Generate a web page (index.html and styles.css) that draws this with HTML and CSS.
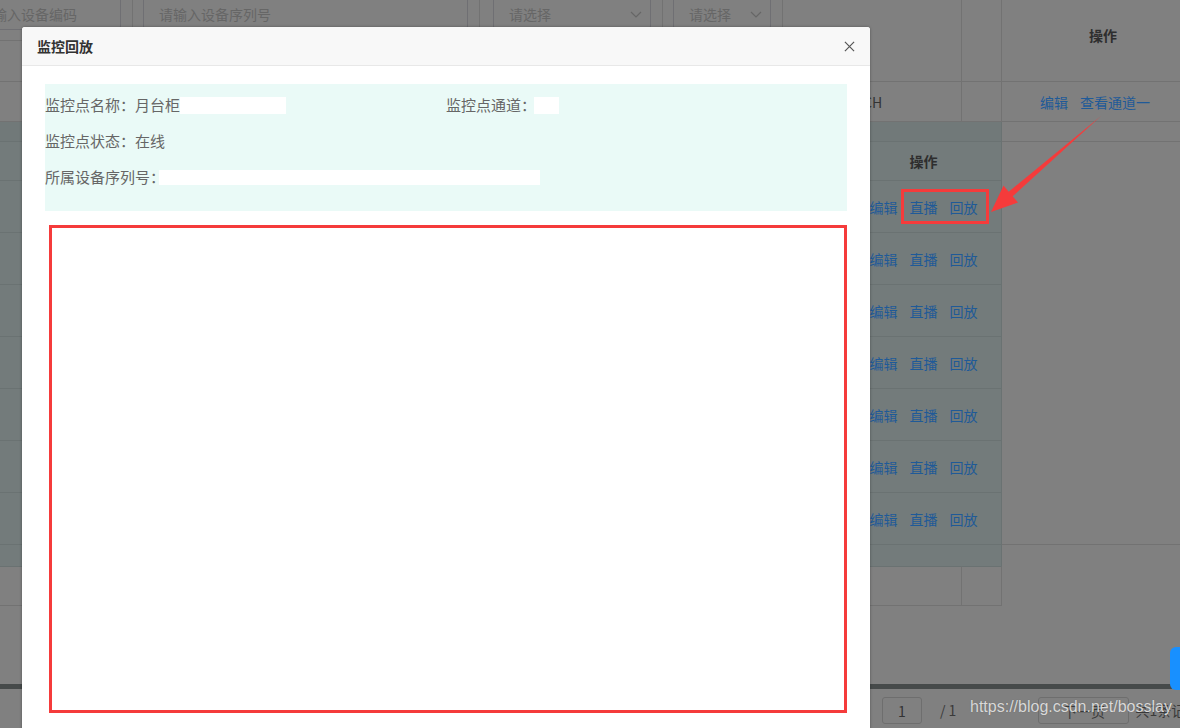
FILE: index.html
```html
<!DOCTYPE html>
<html lang="zh-CN">
<head>
<meta charset="utf-8">
<title>监控回放</title>
<link rel="stylesheet" href="styles.css">
</head>
<body>
<div class="page">
  <div class="thead">
    <div class="cell f-a"><div class="input">请输入设备编码</div></div>
    <div class="cell f-b"><div class="input">请输入设备序列号</div></div>
    <div class="cell f-c"><div class="input select"><span>请选择</span><svg class="chev" viewBox="0 0 12 7"><path d="M1 1l5 5 5-5"/></svg></div></div>
    <div class="cell f-d"><div class="input select"><span>请选择</span><svg class="chev" viewBox="0 0 12 7"><path d="M1 1l5 5 5-5"/></svg></div></div>
    <div class="cell h-e"></div>
    <div class="cell h-f"></div>
    <div class="cell h-g th">操作</div>
    <div class="cell h-a th">设备编码</div>
    <div class="cell h-b th">设备序列号</div>
    <div class="cell h-c th">状态</div>
    <div class="cell h-d th">类型</div>
  </div>

  <div class="trow">
    <div class="cell"></div>
    <div class="cell"></div>
    <div class="cell"></div>
    <div class="cell"></div>
    <div class="cell name">CH</div>
    <div class="cell"></div>
    <div class="cell ops-top"><a>编辑</a><a>查看通道一</a></div>
  </div>

  <div class="expand">
    <div class="expand-left">
      <div class="strip"></div>
      <div class="sub-head"><div class="fill"></div><div class="op th">操作</div></div>
      <div class="sub-row"><div class="fill"></div><div class="op links"><a>编辑</a><a>直播</a><a>回放</a></div></div>
      <div class="sub-row"><div class="fill"></div><div class="op links"><a>编辑</a><a>直播</a><a>回放</a></div></div>
      <div class="sub-row"><div class="fill"></div><div class="op links"><a>编辑</a><a>直播</a><a>回放</a></div></div>
      <div class="sub-row"><div class="fill"></div><div class="op links"><a>编辑</a><a>直播</a><a>回放</a></div></div>
      <div class="sub-row"><div class="fill"></div><div class="op links"><a>编辑</a><a>直播</a><a>回放</a></div></div>
      <div class="sub-row"><div class="fill"></div><div class="op links"><a>编辑</a><a>直播</a><a>回放</a></div></div>
      <div class="sub-row"><div class="fill"></div><div class="op links"><a>编辑</a><a>直播</a><a>回放</a></div></div>
      <div class="strip-bottom"></div>
    </div>
    <div class="expand-right">
      <div class="er-top"></div>
      <div class="er-mid"></div>
    </div>
  </div>

  <div class="trow trow-last">
    <div class="cell"></div>
    <div class="cell"></div>
    <div class="cell"></div>
    <div class="cell"></div>
    <div class="cell"></div>
    <div class="cell"></div>
    <div class="cell blank"></div>
  </div>

  <div class="spacer"></div>
  <div class="scrollbar"></div>

  <div class="pager">
    <div class="pg-input">1</div>
    <span class="pg-total">/ 1</span>
    <div class="pg-btn">下一页</div>
    <span class="pg-count">共1条记录</span>
  </div>
</div>

<div class="modal">
  <div class="modal-head">
    <span class="modal-title">监控回放</span>
    <svg class="close" viewBox="0 0 12 12"><path d="M1 1L11 11M11 1L1 11"/></svg>
  </div>
  <div class="modal-body">
    <div class="info">
      <div class="info-row two">
        <div>监控点名称：月台柜<span class="mask m-name"></span></div>
        <div>监控点通道：<span class="mask m-chan"></span></div>
      </div>
      <div class="info-row">监控点状态：在线</div>
      <div class="info-row">所属设备序列号：<span class="mask m-serial"></span></div>
    </div>
    <div class="video"></div>
  </div>
</div>

<div class="mark-box"></div>
<svg class="arrow" viewBox="0 0 1180 728">
  <polygon points="1101,116 1012.7,196.3 1018,202.5 991,212 1003.5,185.5 1008.7,191.7"/>
</svg>
<div class="side-tab"></div>
<div class="watermark">https://blog.csdn.net/bosslay</div>
</body>
</html>
```

FILE: styles.css
```css
* { box-sizing: border-box; }

html, body {
  margin: 0;
  padding: 0;
}

body {
  width: 1180px;
  height: 728px;
  overflow: hidden;
  position: relative;
  background: #808080;
  font-family: "Noto Sans CJK SC", "Noto Sans", sans-serif;
  font-size: 14px;
  color: #2f2f2f;
}

a { color: #1f5a98; text-decoration: none; }

/* ---------- dimmed page underneath ---------- */
.page {
  width: 1251px;
  margin-left: -47px;
}

.thead,
.trow {
  display: grid;
  grid-template-columns: 180px 347px 183px 120px 179px 40px 202px;
}

.thead { grid-template-rows: 41px 41px; }

.cell {
  border-right: 1px solid #727272;
  border-bottom: 1px solid #727272;
}

.f-a, .f-b, .f-c, .f-d {
  padding: 0 11px 0 10px;
}
.f-c { padding-left: 13px; }

.h-e { grid-column: 5; grid-row: 1 / 3; }
.h-f { grid-column: 6; grid-row: 1 / 3; }
.h-g { grid-column: 7; grid-row: 1 / 3; border-right: none; padding-bottom: 12px; }
.h-a { grid-column: 1; grid-row: 2; }
.h-b { grid-column: 2; grid-row: 2; }
.h-c { grid-column: 3; grid-row: 2; }
.h-d { grid-column: 4; grid-row: 2; }

.th {
  display: flex;
  align-items: center;
  justify-content: center;
  font-weight: bold;
  color: #2e2e2e;
}
.h-a.th { justify-content: flex-end; padding-right: 138px; padding-top: 2px; }

.input {
  height: 30px;
  border: 1px solid #6f6f73;
  border-top: none;
  border-radius: 0 0 4px 4px;
  padding-left: 15px;
  padding-bottom: 1px;
  display: flex;
  align-items: center;
  color: #666;
  white-space: nowrap;
  overflow: hidden;
}
.select { justify-content: space-between; padding-right: 8px; }
.chev { width: 12px; height: 7px; fill: none; stroke: #666; stroke-width: 1.2; }

.trow { height: 40px; }
.trow .cell { display: flex; align-items: center; }
.trow .cell:last-child { border-right: none; }
.name { padding-left: 80px; color: #333; }
.ops-top { padding-left: 38px; gap: 12px; }

.expand {
  display: grid;
  grid-template-columns: 1049px 202px;
}
.expand-left {
  background: #737b7b;
  border-right: 1px solid #6a7272;
}
.strip { height: 20px; border-bottom: 1px solid #6a7272; background: #717979; }
.sub-head { height: 39px; display: flex; border-bottom: 1px solid #6a7272; }
.sub-row { height: 52px; display: flex; border-bottom: 1px solid #6a7272; }
.fill { flex: 1; }
.op { width: 160px; padding-left: 5px; display: flex; align-items: center; justify-content: center; }
.links { gap: 12px; }
.strip-bottom { height: 21px; }

.er-top { height: 20px; border-bottom: 1px solid #727272; }
.er-mid { height: 403px; border-bottom: 1px solid #727272; }

.trow-last .cell { border-top: 1px solid #6a7272; }
.trow-last .blank { border: none; }

.spacer { height: 78px; }
.scrollbar { height: 5px; background: #464a4a; }

.pager {
  height: 40px;
  display: flex;
  align-items: flex-start;
  padding-top: 8px;
  padding-left: 929px;
  color: #3a3a3a;
  white-space: nowrap;
}
.pg-input {
  width: 40px;
  height: 27px;
  border: 1px solid #6e6e6e;
  border-radius: 3px;
  display: flex;
  align-items: center;
  justify-content: center;
  color: #333;
}
.pg-total { margin-left: 18px; line-height: 27px; }
.pg-btn {
  margin-left: 82px;
  width: 91px;
  height: 27px;
  border: 1px solid #6e6e6e;
  border-radius: 3px;
  display: flex;
  align-items: center;
  justify-content: center;
  color: #3a3a3a;
}
.pg-count { margin-left: 6px; line-height: 27px; }

/* ---------- modal ---------- */
.modal {
  position: absolute;
  left: 22px;
  top: 27px;
  width: 848px;
  height: 760px;
  background: #fff;
  border-radius: 3px 3px 0 0;
  box-shadow: 0 0 3px rgba(0, 0, 0, 0.35);
}

.modal-head {
  height: 39px;
  background: #f8f8f8;
  border-bottom: 1px solid #e8e8e8;
  border-radius: 3px 3px 0 0;
  display: flex;
  align-items: center;
  justify-content: space-between;
  padding: 0 15px 0 15px;
}
.modal-title {
  font-size: 14px;
  font-weight: bold;
  color: #333;
}
.close {
  width: 11px;
  height: 11px;
  fill: none;
  stroke: #555;
  stroke-width: 1.3;
}

.modal-body {
  padding: 18px 23px 0 23px;
}

.info {
  background: #eafaf7;
  padding: 3px 0 16px;
  color: #666;
  font-size: 15px;
}
.info-row {
  line-height: 36px;
  height: 36px;
  display: flex;
  align-items: center;
}
.info-row.two {
  display: grid;
  grid-template-columns: 1fr 1fr;
}
.info-row.two > div { display: flex; align-items: center; }

.mask { display: inline-block; background: #fff; position: relative; }
.m-name { width: 106px; height: 17px; margin-left: 0; }
.m-chan { width: 25px; height: 17px; margin-left: -2px; }
.m-serial { width: 381px; height: 15px; margin-left: -6px; }

.video {
  margin: 14px 0 0 4px;
  height: 488px;
  border: 3px solid #f53b3b;
}

/* ---------- annotations ---------- */
.mark-box {
  position: absolute;
  left: 901px;
  top: 189px;
  width: 88px;
  height: 35px;
  border: 3px solid #f53b3b;
}
.arrow {
  position: absolute;
  left: 0;
  top: 0;
  width: 1180px;
  height: 728px;
  fill: #f53b3b;
  pointer-events: none;
}
.side-tab {
  position: absolute;
  right: 0;
  top: 647px;
  width: 10px;
  height: 43px;
  background: #1890ff;
  border-radius: 6px 0 0 6px;
}
.watermark {
  position: absolute;
  left: 970px;
  top: 698px;
  font-family: "Liberation Sans", Arial, sans-serif;
  font-size: 16px;
  color: rgba(240, 240, 240, 0.85);
  text-shadow: 0 0 1px rgba(0, 0, 0, 0.3);
  white-space: nowrap;
}
```
